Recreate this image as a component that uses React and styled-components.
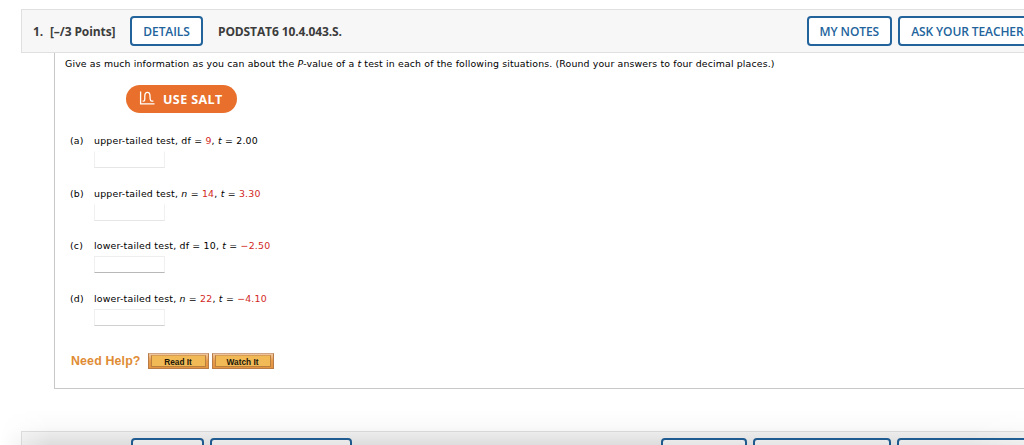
import React from 'react'
import styled, { createGlobalStyle } from 'styled-components'

const GlobalStyle = createGlobalStyle`
    html, body{
        margin: 0;
        height: 445px;
        overflow: hidden;
        background-color: #fff;
    }
    *{
        box-sizing: border-box;
    }
`

const Page = styled.div`
    position: relative;
    width: 1024px;
    height: 445px;
    padding: 9px 0 0 21px;
    overflow: hidden;
`

const Header = styled.div`
    display: flex;
    align-items: flex-start;
    width: 1100px;
    height: 44px;
    padding: 6px 0 0 11px;
    border: 1px solid #e0e0e0;
    background-color: #f7f7f7;
    font: 700 12px/31px 'Open Sans', sans-serif;
    color: #3c3c3c;
    white-space: nowrap;
`

const Number = styled.div`
    width: 17px;
`

const Points = styled.div`
    width: 80px;
    letter-spacing: -.1px;
`

const Code = styled.div`
    margin-left: 15px;
    letter-spacing: -.12px;
`

const HeaderButton = styled.button`
    flex: none;
    width: ${({ $width }) => $width}px;
    height: 30px;
    margin-left: ${({ $gap }) => $gap}px;
    padding: 1px 0 0;
    border: 2px solid #22639c;
    border-radius: 4px;
    background-color: #fff;
    font: 600 12px/26px 'Open Sans', sans-serif;
    letter-spacing: -.1px;
    color: #22639c;
    white-space: nowrap;
`

const Content = styled.div`
    height: 336px;
    margin-left: 33px;
    padding: 4px 0 0 10px;
    border-left: 1px solid #c8c8c8;
    border-bottom: 1px solid #c8c8c8;
    font: 9.4px/14px 'DejaVu Sans', Verdana, sans-serif;
    letter-spacing: .14px;
    color: #000;
    white-space: nowrap;
`

const Prompt = styled.div`
    height: 14px;
`

const SaltButton = styled.button`
    display: flex;
    align-items: center;
    width: 111px;
    height: 28px;
    margin: 14px 0 0 61px;
    padding: 0 0 0 13px;
    border: 0;
    border-radius: 14px;
    background-color: #e8702c;
    font: 700 12.5px/28px 'Open Sans', sans-serif;
    letter-spacing: .4px;
    color: #fff;
    & svg{
        margin: -2px 8px 0 0;
    }
    & span{
        padding-top: 1px;
    }
`

const Parts = styled.div`
    padding: 21px 0 0 5px;
`

const Part = styled.div`
    display: grid;
    grid-template-columns: 24px auto;
    height: 52.7px;
    align-content: start;
    letter-spacing: .2px;
`

const Red = styled.span`
    color: #d2281e;
`

const Answer = styled.input`
    grid-column: 2;
    width: 71px;
    height: 17px;
    margin-top: 3px;
    padding: 0 3px;
    border: 1px solid #f0f0f0;
    border-top-color: ${({ $top }) => $top || '#fff'};
    border-bottom-color: ${({ $bottom }) => $bottom || '#e6e6e6'};
    background-color: #fff;
    outline: none;
`

const Help = styled.div`
    display: flex;
    align-items: center;
    height: 16px;
    margin: 8.2px 0 0 6px;
    & strong{
        width: 77px;
        font: 700 12.4px/16px 'Liberation Sans', Arial, sans-serif;
        color: #e08c35;
    }
`

const HelpButton = styled.button`
    width: ${({ $width }) => $width}px;
    height: 16px;
    margin-right: 3px;
    padding: 1px;
    border: 1px solid #b87c48;
    border-top-color: #cfa486;
    background: linear-gradient(#efc7a0, #e99b49 50%, #e5943e);
    & span{
        display: block;
        height: 12px;
        margin: 0 1px;
        padding-right: 1px;
        border: 1px solid #b9803f;
        border-top-color: #d69d55;
        background-color: #f2b957;
        font: 700 8.3px/12px 'Liberation Sans', Arial, sans-serif;
        color: #201708;
    }
`

const NextHeader = styled(Header)`
    margin-top: 42px;
`

const Spacer = styled.div`
    flex: none;
    width: ${({ $width }) => $width}px;
`

const BottomShade = styled.div`
    position: absolute;
    left: 0;
    right: 0;
    bottom: 0;
    height: 36px;
    background: linear-gradient(rgba(0, 0, 0, 0), rgba(0, 0, 0, .02) 50%, rgba(0, 0, 0, .1));
    mask-image: linear-gradient(to right, transparent, #000 50px, #000 970px, rgba(0, 0, 0, .7));
    pointer-events: none;
`

const SaltIcon = () => (
    <svg width='16' height='14' viewBox='0 0 16 14' fill='none' stroke='#fff' strokeWidth='1.3'>
        <path d='M1.6 .5V12.8H15.5' />
        <path d='M3.6 10.2H4.4C5.9 10.2 5.8 8.5 5.8 5.2C5.8 2.8 6.7 1.4 8.4 1.4S11 2.8 11 5.2C11 8.5 11.2 10.2 12.8 10.2H14.4' />
    </svg>
)

const parts = [
    { label: '(a)', text: <>upper-tailed test, df = <Red>9</Red>, <i>t</i> = 2.00</> },
    { label: '(b)', text: <>upper-tailed test, <i>n</i> = <Red>14</Red>, <i>t</i> = <Red>3.30</Red></> },
    { label: '(c)', text: <>lower-tailed test, df = 10, <i>t</i> = <Red>−2.50</Red></>, top: '#eee', bottom: '#b8b8b8' },
    { label: '(d)', text: <>lower-tailed test, <i>n</i> = <Red>22</Red>, <i>t</i> = <Red>−4.10</Red></>, top: '#eee', bottom: '#d0d0d0' }
]

const App = () => (
    <Page>
        <GlobalStyle />
        <Header>
            <Number>1.</Number>
            <Points>[–/3 Points]</Points>
            <HeaderButton $width={73} $gap={0}>DETAILS</HeaderButton>
            <Code>PODSTAT6 10.4.043.S.</Code>
            <Spacer $width={465} />
            <HeaderButton $width={85} $gap={0}>MY NOTES</HeaderButton>
            <HeaderButton $width={138} $gap={6.5}>ASK YOUR TEACHER</HeaderButton>
        </Header>
        <Content>
            <Prompt>
                Give as much information as you can about the <i>P</i>-value of a <i>t</i> test in each of the following situations. (Round your answers to four decimal places.)
            </Prompt>
            <SaltButton><SaltIcon /><span>USE SALT</span></SaltButton>
            <Parts>
                {parts.map(({ label, text, top, bottom }) => (
                    <Part key={label}>
                        <div>{label}</div>
                        <div>{text}</div>
                        <Answer $top={top} $bottom={bottom} />
                    </Part>
                ))}
            </Parts>
            <Help>
                <strong>Need Help?</strong>
                <HelpButton $width={61}><span>Read It</span></HelpButton>
                <HelpButton $width={62}><span>Watch It</span></HelpButton>
            </Help>
        </Content>
        <NextHeader>
            <Spacer $width={98} />
            <HeaderButton $width={73} $gap={0} />
            <HeaderButton $width={142} $gap={6} />
            <HeaderButton $width={86} $gap={309} />
            <HeaderButton $width={138} $gap={6} />
            <HeaderButton $width={180} $gap={6} />
        </NextHeader>
        <BottomShade />
    </Page>
)

export default App
